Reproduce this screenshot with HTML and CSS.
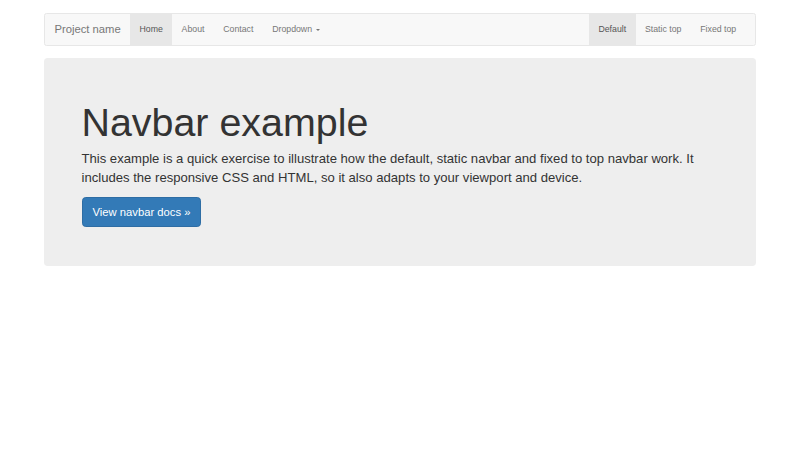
FILE: index.html
```html
<!DOCTYPE html>
<html lang="en">
<head>
    <meta charset="UTF-8">
    <meta name="viewport" content="width=device-width, initial-scale=1.0">
    <title>Navbar Template</title>
    <link rel="stylesheet" href="styles.css">
</head>
<body>
    <div class="container">
        <!-- Static navbar -->
        <nav class="navbar">
            <a href="#" class="brand">Project name</a>
            <ul class="nav">
                <li><a href="#" class="active">Home</a></li>
                <li><a href="#about">About</a></li>
                <li><a href="#contact">Contact</a></li>
                <li><a href="#">Dropdown <span class="caret"></span></a></li>
            </ul>
            <ul class="nav nav-right">
                <li><a href="./" class="active">Default</a></li>
                <li><a href="../navbar-static-top/">Static top</a></li>
                <li><a href="../navbar-fixed-top/">Fixed top</a></li>
            </ul>
        </nav>

        <!-- Main component for a primary marketing message or call to action -->
        <div class="jumbotron">
            <h1>Navbar example</h1>
            <p>This example is a quick exercise to illustrate how the default, static navbar and fixed to top navbar work. It includes the responsive CSS and HTML, so it also adapts to your viewport and device.</p>
            <p><a class="btn" href="#" role="button">View navbar docs &raquo;</a></p>
        </div>
    </div>
</body>
</html>
```

FILE: styles.css
```css
/* Base styles */
* {
    box-sizing: border-box;
}

body {
    margin: 0;
    padding: 12.5px 0;
    font-family: 'Liberation Sans', Arial, sans-serif;
    font-size: 8.75px;
    line-height: 1.42857;
    color: #333;
    background: #fff;
}

a {
    text-decoration: none;
}

.container {
    width: 712px;
    margin: 0 auto;
}

/* Navbar */
.navbar {
    display: flex;
    align-items: stretch;
    min-height: 32px;
    padding-right: 9.4px;
    margin-bottom: 12.5px;
    background-color: #f8f8f8;
    border: 1px solid #e7e7e7;
    border-radius: 2.5px;
}

.brand {
    padding: 9.4px;
    font-size: 11.25px;
    line-height: 12.5px;
    color: #777;
}

.nav {
    display: flex;
    margin: 0;
    padding: 0;
    list-style: none;
}

.nav-right {
    margin-left: auto;
}

.nav a {
    display: block;
    padding: 9.4px;
    line-height: 12.5px;
    color: #777;
}

.nav a.active {
    color: #555;
    background-color: #e7e7e7;
}

.caret {
    display: inline-block;
    width: 0;
    height: 0;
    margin-left: 1.25px;
    vertical-align: middle;
    border-top: 2.5px solid;
    border-right: 2.5px solid transparent;
    border-left: 2.5px solid transparent;
}

/* Jumbotron */
.jumbotron {
    padding: 30px 37.5px;
    margin-bottom: 18.75px;
    background-color: #eee;
    border-radius: 3.75px;
}

.jumbotron h1 {
    margin: 12.5px 0 6.25px;
    font-size: 39.4px;
    font-weight: 500;
    line-height: 1.1;
    color: inherit;
}

.jumbotron p {
    margin: 0 0 9.4px;
    font-size: 13.1px;
    line-height: 18.75px;
}

.btn {
    display: inline-block;
    padding: 6.25px 10px;
    font-size: 11.25px;
    line-height: 15px;
    color: #fff;
    background-color: #337ab7;
    border: 1px solid #2e6da4;
    border-radius: 3.75px;
}
```
